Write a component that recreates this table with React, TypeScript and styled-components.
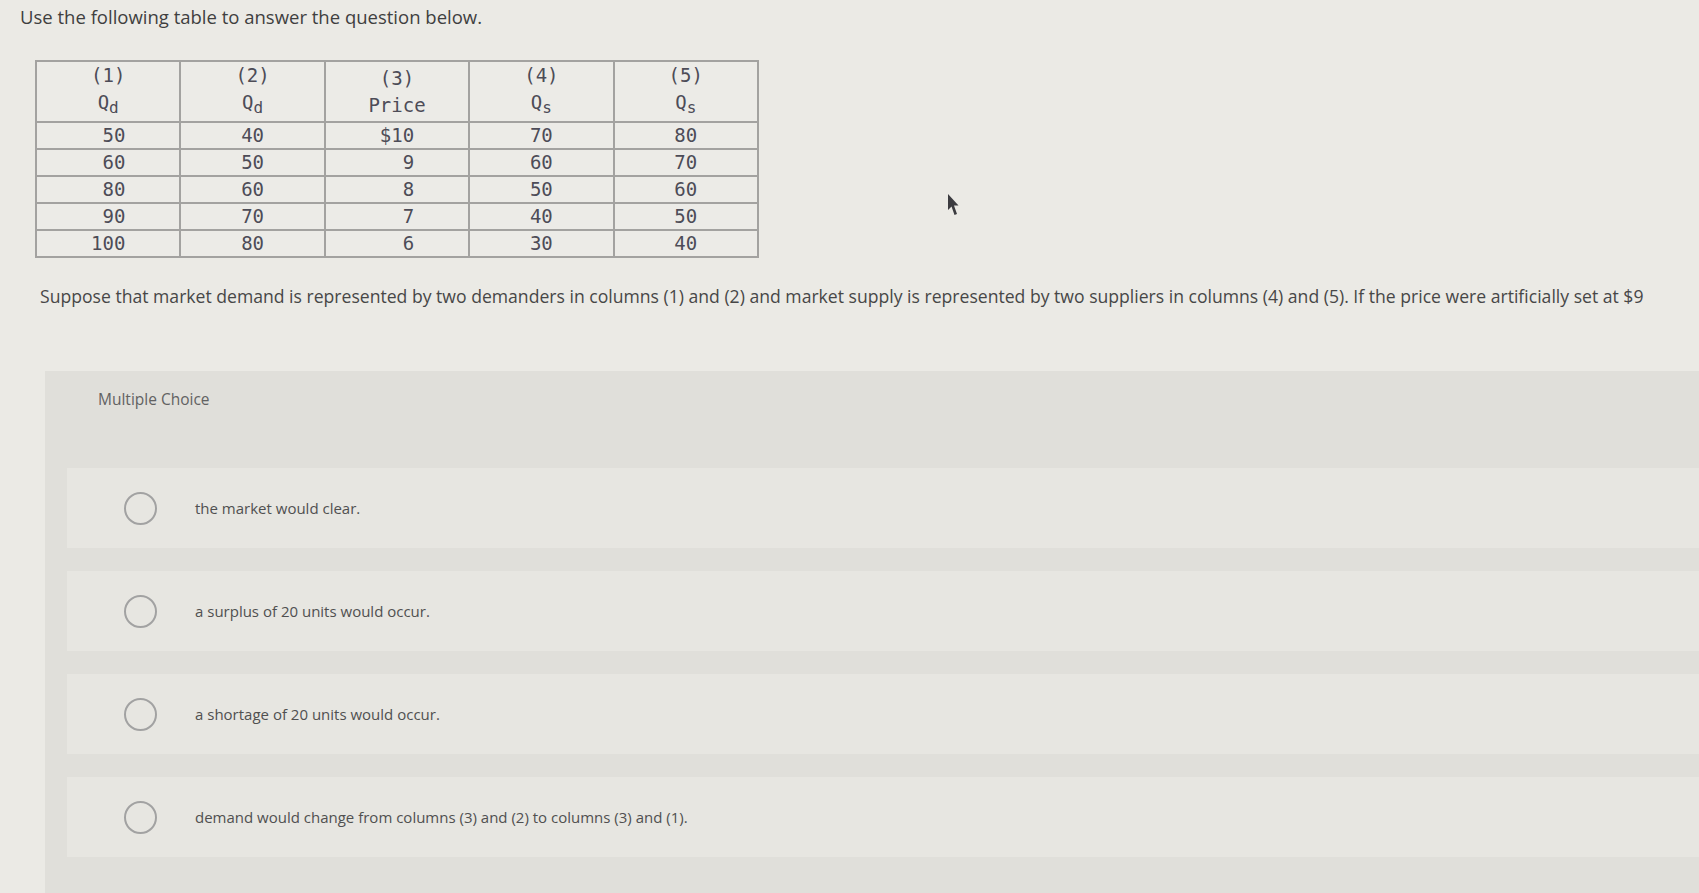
import React from "react";
import styled, {createGlobalStyle} from "styled-components";

const GlobalStyle = createGlobalStyle`
  html, body {
    margin: 0;
    padding: 0;
    background: #ebeae5;
    font-family: "Open Sans", Lato, sans-serif;
    color: #4a4a4a;
  }
`

type Row = string[]

const headers: [string, string, string][] = [
    ["(1)", "Q", "d"],
    ["(2)", "Q", "d"],
    ["(3)", "Price", ""],
    ["(4)", "Q", "s"],
    ["(5)", "Q", "s"],
]

const rows: Row[] = [
    ["50", "40", "$10", "70", "80"],
    ["60", "50", "9", "60", "70"],
    ["80", "60", "8", "50", "60"],
    ["90", "70", "7", "40", "50"],
    ["100", "80", "6", "30", "40"],
]

const choices = [
    "the market would clear.",
    "a surplus of 20 units would occur.",
    "a shortage of 20 units would occur.",
    "demand would change from columns (3) and (2) to columns (3) and (1).",
]

// widest value per column, so numbers line up on the right
const colWidths = headers.map((_, i) => Math.max(...rows.map(r => r[i].length)))

const App: React.FC = () => {
    return (
        <Page>
            <GlobalStyle/>
            <Cursor viewBox="0 0 12 24">
                <path d="M1 1 L1 17 L4.5 13.5 L7.5 22 L10 21 L7 12.5 L11.5 12.5 Z" fill="#3c3c40"/>
            </Cursor>

            <Intro>Use the following table to answer the question below.</Intro>

            <DataTable>
                <thead>
                <tr>
                    {headers.map(([num, label, sub]) => (
                        <HeadCell key={num}>
                            <div>{num}</div>
                            <div>{label}{sub && <Sub>{sub}</Sub>}</div>
                        </HeadCell>
                    ))}
                </tr>
                </thead>
                <tbody>
                {rows.map((row, r) => (
                    <tr key={r}>
                        {row.map((value, c) => (
                            <Cell key={c}>
                                <Num $chars={colWidths[c]}>{value}</Num>
                            </Cell>
                        ))}
                    </tr>
                ))}
                </tbody>
            </DataTable>

            <Question>
                Suppose that market demand is represented by two demanders in columns (1) and (2) and market supply is
                represented by two suppliers in columns (4) and (5). If the price were artificially set at $9
            </Question>

            <ChoicePanel>
                <PanelLabel>Multiple Choice</PanelLabel>
                <ChoiceList>
                    {choices.map(text => (
                        <Choice key={text}>
                            <Radio/>
                            <ChoiceText>{text}</ChoiceText>
                        </Choice>
                    ))}
                </ChoiceList>
            </ChoicePanel>
        </Page>
    )
}

export default App

const Page = styled.div`
  position: relative;
  min-height: 893px;
  display: flex;
  flex-direction: column;
  padding-top: 6px;
  box-sizing: border-box;
  overflow: hidden;
`
const Cursor = styled.svg`
  position: absolute;
  left: 947px;
  top: 193px;
  width: 12px;
  height: 24px;
`
const Intro = styled.p`
  margin: 0 0 0 20px;
  font-size: 18.5px;
  line-height: 22px;
  color: #3f3f3f;
`
const DataTable = styled.table`
  margin: 32px 0 0 35px;
  width: 724px;
  border-collapse: collapse;
  table-layout: fixed;
  font-family: "DejaVu Sans Mono", "Liberation Mono", monospace;
  font-size: 19px;
  color: #4d4c57;
  background: #ecebe7;
`
const HeadCell = styled.th`
  border: 2px solid #a3a2a0;
  font-weight: normal;
  height: 55px;
  padding: 0;
  line-height: 27px;
  text-align: center;
`
const Sub = styled.span`
  font-size: 16px;
  vertical-align: -4px;
`
const Cell = styled.td`
  border: 2px solid #a3a2a0;
  height: 25px;
  padding: 0;
  line-height: 25px;
  text-align: center;
`
const Num = styled.span<{ $chars: number }>`
  display: inline-block;
  width: ${p => p.$chars}ch;
  text-align: right;
`
const Question = styled.p`
  margin: 27px 0 0 40px;
  font-size: 17.6px;
  line-height: 22px;
  color: #474747;
  white-space: nowrap;
`
const ChoicePanel = styled.section`
  flex: 1;
  margin: 64px 0 0 45px;
  background: #e0dfda;
  padding: 18px 0 0 0;
`
const PanelLabel = styled.div`
  margin-left: 53px;
  font-size: 15.5px;
  line-height: 20px;
  color: #626262;
`
const ChoiceList = styled.div`
  display: flex;
  flex-direction: column;
  gap: 23px;
  margin-top: 59px;
`
const Choice = styled.div`
  display: flex;
  align-items: center;
  gap: 38px;
  height: 80px;
  margin-left: 22px;
  padding-left: 57px;
  background: #e7e6e1;
`
const Radio = styled.span`
  width: 29px;
  height: 29px;
  border: 2px solid #a2a2a2;
  border-radius: 50%;
  flex-shrink: 0;
`
const ChoiceText = styled.span`
  font-size: 15px;
  color: #505050;
`
